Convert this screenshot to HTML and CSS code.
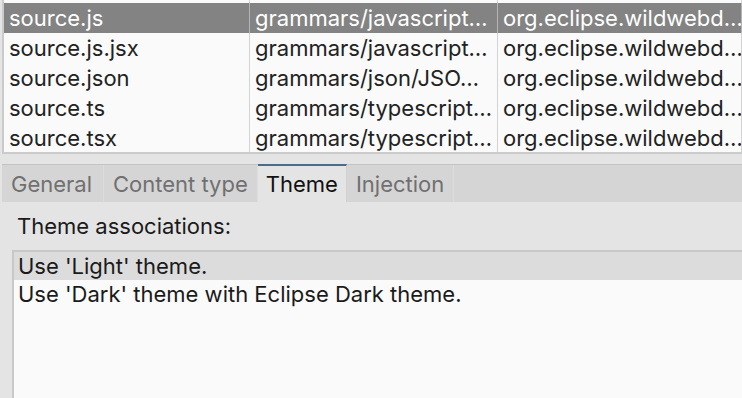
FILE: index.html
```html
<!DOCTYPE html>
<html lang="en">
<head>
    <meta charset="UTF-8">
    <meta name="viewport" content="width=device-width, initial-scale=1.0">
    <title>TextMate Grammars</title>
    <link rel="stylesheet" href="styles.css">
</head>
<body>
    <div class="grammar-table">
        <div class="row partial">
            <div class="cell"></div>
            <div class="cell"></div>
            <div class="cell"></div>
        </div>
        <div class="row selected">
            <div class="cell">source.js</div>
            <div class="cell">grammars/javascript…</div>
            <div class="cell">org.eclipse.wildwebd…</div>
        </div>
        <div class="row">
            <div class="cell">source.js.jsx</div>
            <div class="cell">grammars/javascript…</div>
            <div class="cell">org.eclipse.wildwebd…</div>
        </div>
        <div class="row">
            <div class="cell">source.json</div>
            <div class="cell">grammars/json/JSO…</div>
            <div class="cell">org.eclipse.wildwebd…</div>
        </div>
        <div class="row">
            <div class="cell">source.ts</div>
            <div class="cell">grammars/typescript…</div>
            <div class="cell">org.eclipse.wildwebd…</div>
        </div>
        <div class="row">
            <div class="cell">source.tsx</div>
            <div class="cell">grammars/typescript…</div>
            <div class="cell">org.eclipse.wildwebd…</div>
        </div>
    </div>

    <div class="tabs">
        <div class="tab">General</div>
        <div class="tab">Content type</div>
        <div class="tab active">Theme</div>
        <div class="tab">Injection</div>
    </div>

    <div class="tab-panel">
        <div class="panel-label">Theme associations:</div>
        <div class="theme-list">
            <div class="theme-item selected">Use 'Light' theme.</div>
            <div class="theme-item">Use 'Dark' theme with Eclipse Dark theme.</div>
        </div>
    </div>
</body>
</html>
```

FILE: styles.css
```css
body {
    margin: 0;
    background: #e4e4e4;
    font-family: Inter, "Liberation Sans", sans-serif;
    color: #222;
    overflow: hidden;
    height: 398px;
}
.grammar-table {
    margin-left: 2px;
    border-left: 2px solid #cbcbcb;
    border-bottom: 2px solid #cbcbcb;
    background: #fafafa;
    height: 152px;
    overflow: hidden;
}
.row {
    display: grid;
    grid-template-columns: 246px 248px 1fr;
    height: 30px;
    font-size: 22px;
    line-height: 30px;
}
.row.partial {
    height: 3px;
}
.row.selected {
    background: #838383;
    color: #fff;
}
.cell {
    padding-left: 5px;
    white-space: nowrap;
    overflow: hidden;
    border-right: 1px solid #d3d3d3;
}
.row.selected .cell {
    border-right-color: #b4b4b4;
}
.tabs {
    display: flex;
    margin-top: 10px;
    margin-left: 2px;
    height: 37px;
    border-top: 1px solid #c4c4c4;
    background: #d5d5d5;
}
.tab {
    padding: 2px 9px 0 9px;
    font-size: 22px;
    line-height: 35px;
    color: #707070;
    border-right: 1px solid #dcdcdc;
}
.tab:first-child {
    padding-right: 11px;
}
.tab.active {
    background: #e4e4e4;
    color: #111;
    border-top: 2px solid #4b6b8a;
    margin-top: -1px;
    padding: 1px 8px 0 8px;
    border-right-color: #d0d0d0;
}
.tab-panel {
    padding: 11px 0 0 12px;
}
.panel-label {
    font-size: 22px;
    line-height: 26px;
    padding-left: 5px;
    color: #1a1a1a;
}
.theme-list {
    margin-top: 11px;
    border-top: 2px solid #c8c8c8;
    border-left: 2px solid #c8c8c8;
    background: #fafafa;
    height: 160px;
}
.theme-item {
    font-size: 22px;
    line-height: 29px;
    padding: 0 0 0 4px;
    color: #1a1a1a;
}
.theme-item.selected {
    background: #dcdcdc;
    line-height: 28px;
}
```
